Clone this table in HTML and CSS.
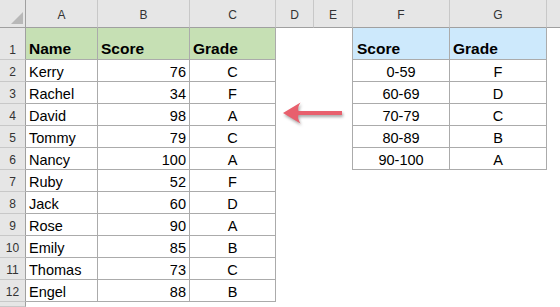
FILE: index.html
```html
<!DOCTYPE html>
<html>
<head>
<meta charset="utf-8">
<link rel="stylesheet" href="styles.css">
</head>
<body>
<div class="sheet">
  <div class="h corner"><span class="tri"></span></div>
  <div class="h">A</div><div class="h">B</div><div class="h">C</div><div class="h">D</div><div class="h">E</div><div class="h">F</div><div class="h">G</div><div class="h last"></div>

  <div class="r">1</div>
  <div class="t g hd">Name</div><div class="t g hd">Score</div><div class="t g hd">Grade</div>
  <div class="c"></div><div class="c e"></div>
  <div class="t bl hd sc">Score</div><div class="t bl hd">Grade</div><div class="c"></div>

  <div class="r">2</div>
  <div class="t">Kerry</div><div class="t num">76</div><div class="t ctr">C</div>
  <div class="c"></div><div class="c e"></div>
  <div class="t ctr">0-59</div><div class="t ctr">F</div><div class="c"></div>

  <div class="r">3</div>
  <div class="t">Rachel</div><div class="t num">34</div><div class="t ctr">F</div>
  <div class="c"></div><div class="c e"></div>
  <div class="t ctr">60-69</div><div class="t ctr">D</div><div class="c"></div>

  <div class="r">4</div>
  <div class="t">David</div><div class="t num">98</div><div class="t ctr">A</div>
  <div class="c"></div><div class="c e"></div>
  <div class="t ctr">70-79</div><div class="t ctr">C</div><div class="c"></div>

  <div class="r">5</div>
  <div class="t">Tommy</div><div class="t num">79</div><div class="t ctr">C</div>
  <div class="c"></div><div class="c e"></div>
  <div class="t ctr">80-89</div><div class="t ctr">B</div><div class="c"></div>

  <div class="r">6</div>
  <div class="t">Nancy</div><div class="t num">100</div><div class="t ctr">A</div>
  <div class="c"></div><div class="c e"></div>
  <div class="t ctr">90-100</div><div class="t ctr">A</div><div class="c"></div>

  <div class="r">7</div>
  <div class="t">Ruby</div><div class="t num">52</div><div class="t ctr">F</div>
  <div class="c"></div><div class="c"></div><div class="c"></div><div class="c"></div><div class="c"></div>

  <div class="r">8</div>
  <div class="t">Jack</div><div class="t num">60</div><div class="t ctr">D</div>
  <div class="c"></div><div class="c"></div><div class="c"></div><div class="c"></div><div class="c"></div>

  <div class="r">9</div>
  <div class="t">Rose</div><div class="t num">90</div><div class="t ctr">A</div>
  <div class="c"></div><div class="c"></div><div class="c"></div><div class="c"></div><div class="c"></div>

  <div class="r">10</div>
  <div class="t">Emily</div><div class="t num">85</div><div class="t ctr">B</div>
  <div class="c"></div><div class="c"></div><div class="c"></div><div class="c"></div><div class="c"></div>

  <div class="r">11</div>
  <div class="t">Thomas</div><div class="t num">73</div><div class="t ctr">C</div>
  <div class="c"></div><div class="c"></div><div class="c"></div><div class="c"></div><div class="c"></div>

  <div class="r">12</div>
  <div class="t">Engel</div><div class="t num">88</div><div class="t ctr">B</div>
  <div class="c"></div><div class="c"></div><div class="c"></div><div class="c"></div><div class="c"></div>

  <div class="r"></div>
  <div class="c"></div><div class="c"></div><div class="c"></div><div class="c"></div><div class="c"></div><div class="c"></div><div class="c"></div><div class="c"></div>

  <svg class="arrow" width="70" height="30" viewBox="0 0 70 30">
    <path d="M3 13 L20.5 2.5 Q17 8 18.5 11 L62 11 L62 15 L18.5 15 Q17 18 20.5 23.5 Z" fill="#e8606d"/>
  </svg>
</div>
</body>
</html>
```

FILE: styles.css
```css
* { box-sizing: border-box; }
html, body {
  margin: 0;
  padding: 0;
  background: #fff;
  overflow: hidden;
}
body {
  width: 560px;
  height: 307px;
  font-family: "Liberation Sans", Arial, sans-serif;
  color: #000;
}
.sheet {
  position: relative;
  display: grid;
  grid-template-columns: 26px 72px 92px 86px 38px 39px 97px 97px 1fr;
  grid-template-rows: 28px 32px repeat(11, 22px) 5px;
  width: 560px;
  height: 307px;
  overflow: hidden;
}
.sheet > div {
  display: flex;
  align-items: flex-end;
  min-width: 0;
  white-space: nowrap;
}
.h {
  background: #e6e6e6;
  border-right: 1px solid #c8c8c8;
  border-bottom: 1px solid #a0a0a0;
  justify-content: center;
  align-items: center !important;
  font-size: 12px;
  color: #333;
  padding-top: 2px;
}
.h.last { border-right: none; }
.corner {
  position: relative;
  border-right-color: #a0a0a0;
}
.tri {
  position: absolute;
  right: 2px;
  bottom: 3px;
  width: 0;
  height: 0;
  border-left: 12px solid transparent;
  border-bottom: 12px solid #b8b8b8;
}
.r {
  background: #e6e6e6;
  border-right: 1px solid #a0a0a0;
  border-bottom: 1px solid #c8c8c8;
  justify-content: center;
  font-size: 12px;
  color: #333;
  padding-bottom: 2px;
}
.t {
  border-right: 1px solid #ababab;
  border-bottom: 1px solid #ababab;
  font-size: 14.5px;
  padding: 0 3px 1px 3px;
}
.e { border-right: 1px solid #ababab; }
.num { justify-content: flex-end; }
.ctr { justify-content: center; }
.hd {
  font-weight: bold;
  font-size: 15.5px;
}
.g { background: #c6e0b4; }
.bl { background: #cde9fc; }
.sc { padding-left: 4px; }
.arrow {
  position: absolute;
  left: 280px;
  top: 100px;
  filter: drop-shadow(1.5px 2.5px 1.5px rgba(0, 0, 0, 0.35));
}
```
